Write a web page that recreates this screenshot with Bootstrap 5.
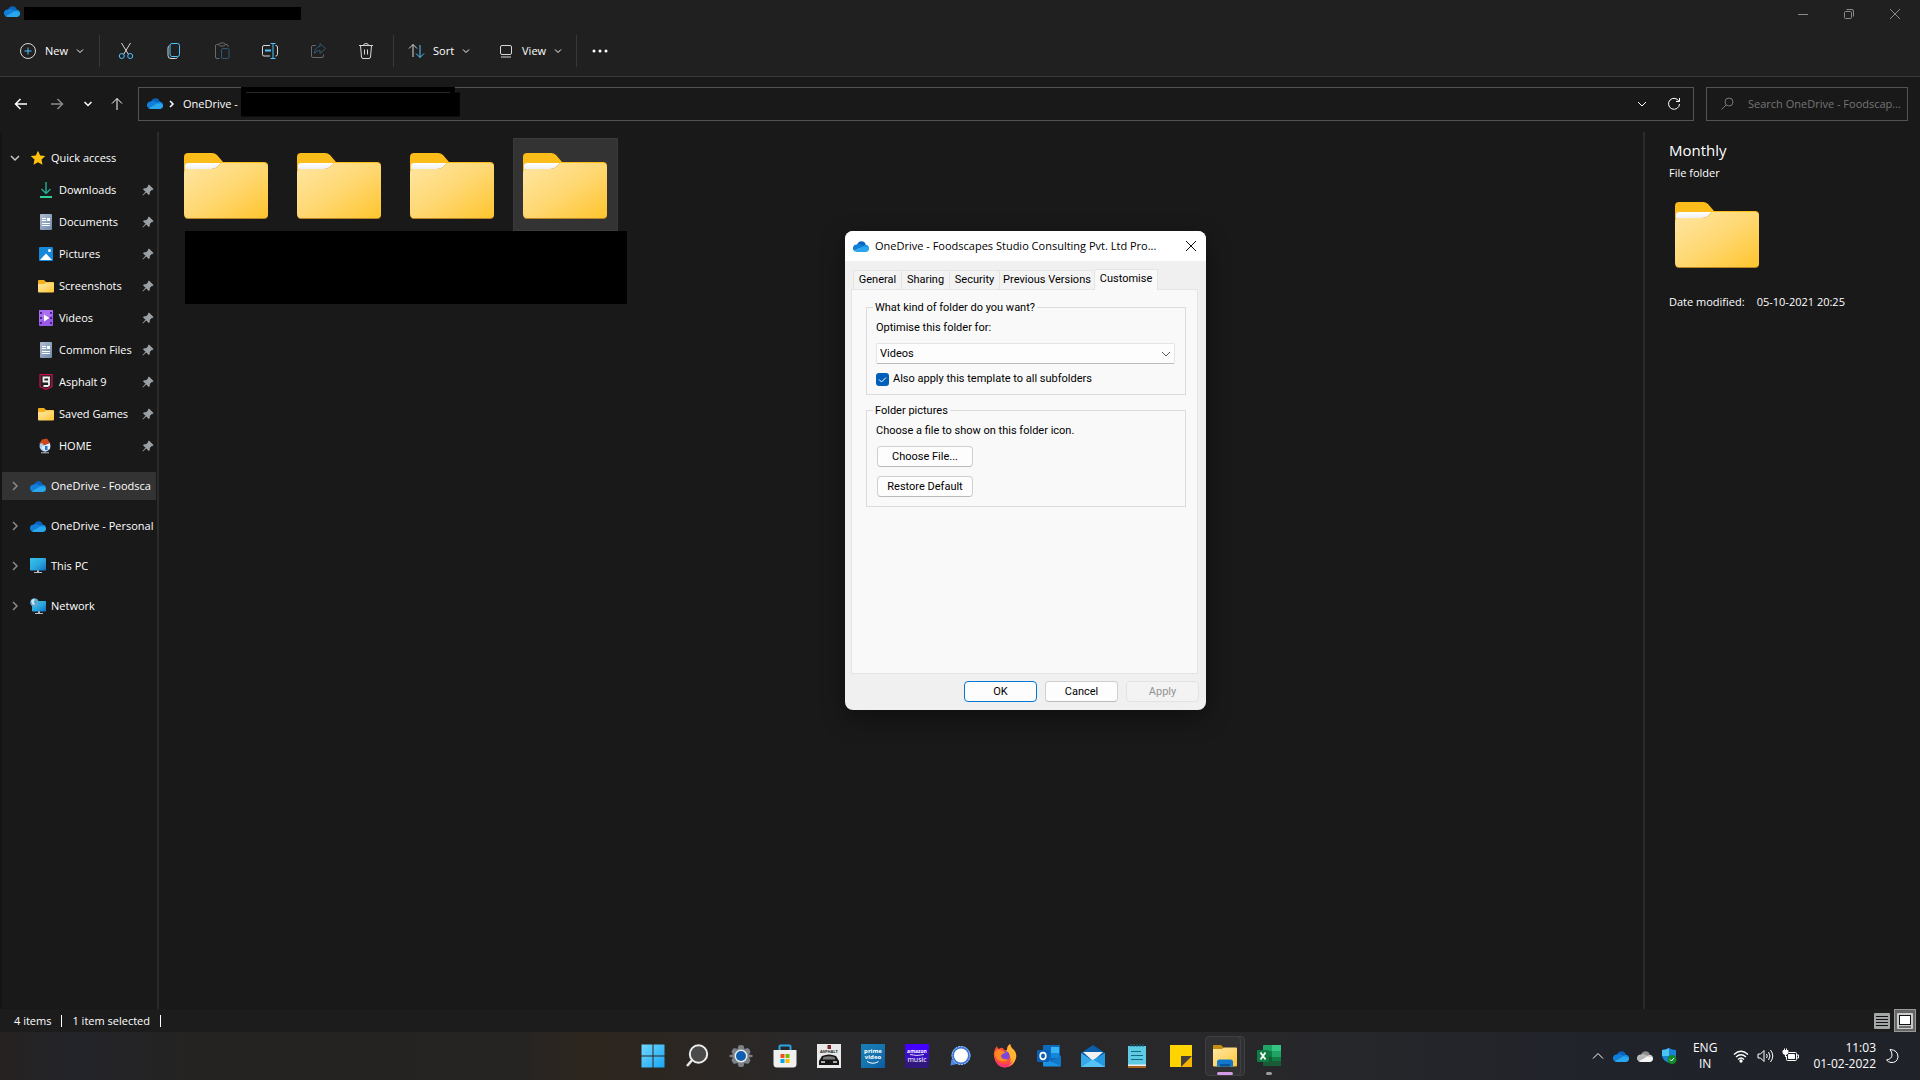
<!DOCTYPE html>
<html lang="en" data-bs-theme="dark">
<head>
<meta charset="utf-8">
<meta name="viewport" content="width=device-width, initial-scale=1">
<title>OneDrive - File Explorer</title>
<link href="https://cdn.jsdelivr.net/npm/bootstrap@5.3.0/dist/css/bootstrap.min.css" rel="stylesheet">
<style>
body{font-family:"Open Sans","Noto Sans",sans-serif;font-size:11px;line-height:16px;background:#191919;color:#fff}
svg{display:block;flex:none}
button{font:inherit}
a{color:inherit;text-decoration:none}
.plain{background:none;border:0;color:inherit;padding:0}
.window-top{background:#202020;border-bottom:1px solid #3b3b3b}
.title-row{height:25px;padding:0 2px 0 4px}
.title-row>svg{margin-top:6px}
.hidden-title{background:#000;width:277px;height:13px;margin:7px 0 0 4px}
.cap-btn{width:46px;height:28px;color:#8a8a8a;display:flex;align-items:center;justify-content:center}
.tool-row{height:51px;padding-left:11px}
.tool-btn{height:32px;display:flex;align-items:center;justify-content:center}
.tool-new{padding:0 15px 0 8px}
.tool-group{padding:0 3px 0 2px}
.tool-drop{padding:0 14px}
.tool-icon{width:48px}
.tool-sep{width:1px;height:32px;background:#383838}
.nav-row{height:55px;padding:10px 12px 12px 5px}
.nav-btn{width:32px;height:32px;display:flex;align-items:center;justify-content:center}
.nav-btn.slim{width:29px}
.addr{border:1px solid #535353;height:34px;padding:0 4px 0 8px;margin-left:7px}
.hidden-path{background:linear-gradient(#292929,#292929) 5px 5px/204px 1px no-repeat,#000;width:219px;height:30px;margin-left:3px;margin-top:-4px;clip-path:polygon(0 0,214px 0,214px 6px,100% 6px,100% 100%,0 100%)}
.find{border:1px solid #535353;width:202px;height:34px;margin-left:12px;padding-left:14px;gap:14px}
.find input{background:none;border:0;outline:0;color:#fff;width:100%;padding:0;text-overflow:ellipsis}
.find input::placeholder{color:#767676;opacity:1}
.side{width:159px;padding:12px 1px 0 0;border-left:2px solid #141414;border-right:2px solid #2b2b2b}
.side ul{margin:0;padding:0;list-style:none}
.side-link{height:28px;display:flex;align-items:center;overflow:hidden;white-space:nowrap;padding-left:8px}
.side-link.sub-link{padding:0 2px 0 36px;margin-top:4px}
.side-link .caret{width:10px;margin-right:10px}
.side-link .ico{width:16px;margin-right:5px}
.grp{margin-top:12px}
.side-link.on{background:#333}
.files{padding:6px 15px}
.tile{width:105px;height:93px;padding:15px 10px 0}
.tile.on{background:#333;box-shadow:inset 0 0 0 1px #3a3a3a}
.hidden-names{background:#000;width:442px;height:73px;margin-left:11px}
.detail{width:277px;border-left:2px solid #2b2b2b;padding:7px 24px}
.detail h1{font-size:15px;line-height:22px;margin:0}
.detail svg{margin:21px 0 26px 6px}
.status{height:23px;background:#1c1c1c;padding:0 4px 0 14px}
.bar-sep{width:1px;height:12px;background:#fff;margin:0 10px}
.view-on{width:22px;height:23px;background:#666;border:1px solid #999;display:flex;align-items:center;justify-content:center}
.task{height:48px;padding-right:20px;background:linear-gradient(90deg,#262221 0,#23242a 4%,#252322 10%,#252423 27%,#2d261f 30%,#2c2620 34%,#29282a 43%,#28282a 64%,#21232b 84%,#20222a 100%)}
.task-apps{padding-left:2px}
.task-btn{width:44px;height:48px;display:flex;align-items:center;justify-content:center;position:relative}
.task-btn.on::before,.task-btn.on::after{content:"";position:absolute;top:4px;height:40px;border-radius:4px;background:#313133;border:1px solid #404042}
.task-btn.on::before{left:6px;width:36px}
.task-btn.on::after{left:2px;width:36px}
.task-btn.on svg,.task-btn.on .run{z-index:1}
.task-btn.on svg{position:relative}
.run{position:absolute;bottom:5px;height:3px;border-radius:2px;width:16px;background:#d29be4}
.run.idle{width:6px;background:#9a9a9a}
.tray{font-size:12px}
.clock{margin-left:14px}
.props{position:absolute;left:845px;top:231px;width:361px;border-radius:8px;background:#f0f0f0;color:#000;font-family:Roboto,"Liberation Sans",sans-serif;overflow:hidden;box-shadow:0 8px 24px #0006;line-height:14px}
.props-head{height:30px;background:#fff;padding:0 6px 0 8px;gap:6px;font-family:"Open Sans","Noto Sans",sans-serif}
.props-tabs{margin:7px 8px 0;height:21px}
.ptab{height:19px;border:1px solid #e5e5e5;border-bottom:0;border-left-width:0;background:#f3f3f3;text-align:center;width:48px}
.ptab:first-child{border-left-width:1px;width:49px}
.ptab.mid-tab{width:50px}
.ptab.long-tab{width:95px}
.ptab.on{height:21px;background:#f9f9f9;width:63px;position:relative;margin-bottom:-1px;padding-bottom:2px}
.ppanel{margin:0 8px 0 6px;border:1px solid #e5e5e5;background:#f9f9f9;height:385px;padding:17px 11px 0 14px}
.pbox{border:1px solid #dcdcdc;padding:13px 10px 8px 9px;position:relative}
.pbox+.pbox{margin-top:15px;padding-bottom:9px}
.pbox legend{font-size:11px;line-height:14px;position:absolute;top:-7px;left:6px;width:auto;padding:0 2px;background:#f9f9f9;margin:0;float:none}
.pbox select{appearance:none;display:block;width:100%;height:21px;border:1px solid #e5e5e5;border-bottom-color:#bbb;background:#fdfdfd url("data:image/svg+xml,%3Csvg xmlns='http://www.w3.org/2000/svg' width='10' height='10' fill='none' stroke='%23555'%3E%3Cpath d='M1 3L5 7L9 3'/%3E%3C/svg%3E") right 3px center no-repeat;border-radius:2px;color:#000;font:inherit;padding:0 3px}
.pbtn{height:21px;border:1px solid #d0d0d0;border-bottom-color:#bababa;border-radius:4px;background:#fdfdfd;color:#000;padding:0;line-height:14px}
.pbtn.wide{width:96px;display:block;margin-left:1px}
.pbtn.wide+.pbtn.wide{margin-top:9px}
.pbtn.foot{width:73px}
.pbtn.main-btn{border-color:#0078d4}
.pbtn:disabled{background:#f3f3f3;border-color:#e2e2e2;color:#929292}
.tick{appearance:none;width:13px;height:13px;border-radius:3px;background:#005fb8 url("data:image/svg+xml,%3Csvg xmlns='http://www.w3.org/2000/svg' width='13' height='13' fill='none' stroke='white'%3E%3Cpath d='M3 6.500L5.500 9L10 4.500'/%3E%3C/svg%3E") center no-repeat;margin:0;display:block}
.props-foot{padding:7px 7px 8px}
</style>
<script src="https://cdn.jsdelivr.net/npm/bootstrap@5.3.0/dist/js/bootstrap.bundle.min.js"></script>
</head>
<body class="d-flex flex-column vh-100 overflow-hidden">
<svg width="0" height="0" class="position-absolute" aria-hidden="true">
<defs>
<linearGradient id="gf" x1="0" y1="0" x2="1" y2="1"><stop offset="0" stop-color="#ffe6a3"/><stop offset=".5" stop-color="#ffd873"/><stop offset="1" stop-color="#ffc52e"/></linearGradient>
<linearGradient id="gw" x1="0" y1="0" x2="0" y2="1"><stop offset="0" stop-color="#fff"/><stop offset="1" stop-color="#d9dde3"/></linearGradient>
<linearGradient id="gd" x1="0" y1="0" x2="1" y2="1"><stop offset="0" stop-color="#aebfd4"/><stop offset="1" stop-color="#7189aa"/></linearGradient>
<linearGradient id="gm" x1="0" y1="0" x2="1" y2="1"><stop offset="0" stop-color="#35c5ea"/><stop offset=".55" stop-color="#2aa5dc"/><stop offset="1" stop-color="#0f6cc4"/></linearGradient>
<linearGradient id="gb" x1="0" y1="0" x2="1" y2="1"><stop offset="0" stop-color="#6fd8ff"/><stop offset="1" stop-color="#1ba5f2"/></linearGradient>
</defs>
<symbol id="folder" viewBox="0 0 84 66"><path d="M0 4Q0 0 4 0H28Q31 0 33 2L39 9H80Q84 9 84 13V40H0Z" fill="#fcbc19"/><path d="M1 24V13Q1 10 4 10H37L33 14Q31 16 28 16H8Z" fill="url(#gw)"/><path d="M0 61V20Q0 16 4 16H27Q31 16 33 14L37 10H80Q84 10 84 14V62Q84 66 80 66H4Q0 66 0 61Z" fill="#b98423"/><path d="M0 60V20Q0 16 4 16H27Q31 16 33 14L37 10H80Q84 10 84 14V61Q84 65 80 65H4Q0 65 0 60Z" fill="url(#gf)"/></symbol>
<symbol id="fold-s" viewBox="0 0 16 14"><path d="M0 2Q0 1 1 1H6L8 3H15Q16 3 16 4V8H0Z" fill="#f3b01c"/><path d="M0 5H6L8 3.500H15Q16 3.500 16 4.500V12.500Q16 13.500 15 13.500H1Q0 13.500 0 12.500Z" fill="url(#gf)"/></symbol>
<symbol id="cloud" viewBox="0 0 16 11"><path d="M4 4Q5 .5 8.500 .3Q11.500 .2 12.800 3.500L9 7L3 6Z" fill="#0a64bd"/><path d="M4 3.500A3.700 3.700 0 0 0 1.200 10L11 5L8 3.600Q6 2.600 4 3.500Z" fill="#0f7fdc"/><path d="M11 4.500Q12.500 3.200 14.500 4.200Q16 5.200 16 7.500L15 9L9 6Z" fill="#1391e4"/><path d="M1.200 10Q2.300 10.900 4 10.900H12.800Q15.700 10.800 16 8Q16 6.800 15.200 6.300L10 5.500Z" fill="#2aa6ee"/></symbol>
<symbol id="cloud-w" viewBox="0 0 16 11"><path d="M4 4Q5 .5 8.500 .3Q11.500 .2 12.800 3.500L9 7L3 6Z" fill="#8d8d8d"/><path d="M4 3.500A3.700 3.700 0 0 0 1.200 10L11 5L8 3.600Q6 2.600 4 3.500Z" fill="#b9b9b9"/><path d="M11 4.500Q12.500 3.200 14.500 4.200Q16 5.200 16 7.500L15 9L9 6Z" fill="#d2d2d2"/><path d="M1.200 10Q2.300 10.900 4 10.900H12.800Q15.700 10.800 16 8Q16 6.800 15.200 6.300L10 5.500Z" fill="#f5f5f5"/></symbol>
<symbol id="down" viewBox="0 0 8 8"><path d="M1 2.500L4 5.500L7 2.500" fill="none" stroke="currentColor"/></symbol>
<symbol id="cr" viewBox="0 0 10 10"><path d="M3 1L7 5L3 9" fill="none" stroke="#8a8a8a" stroke-width="1.500"/></symbol>
<symbol id="pin" viewBox="0 0 12 12"><path d="M7 .5L11.500 5L10.300 6.200L9.700 6L7.800 8V10.200L6.800 11L4.300 8.500L1 11.500L.5 11L3.500 7.700L1 5.200L1.900 4.200H4.100L6 2.300L5.800 1.700Z" fill="#9aa1a6"/></symbol>
<symbol id="doc" viewBox="0 0 16 16"><rect x="2" width="12" height="16" rx="1" fill="url(#gd)"/><path d="M4 4.500H8M4 6.500H8M4 9.500H12M4 11.500H12" stroke="#fff"/><rect x="9" y="4" width="3" height="3" fill="#fff"/></symbol>
<symbol id="pc" viewBox="0 0 16 16"><path d="M7 12H9V14H12V15H4V14H7Z" fill="#b8bec4"/><rect y="0" width="16" height="12.500" rx=".7" fill="url(#gm)"/></symbol>
</svg>

<header class="window-top">
  <div class="title-row d-flex align-items-start">
    <svg width="16" height="11"><use href="#cloud"/></svg>
    <div class="hidden-title"></div>
    <div class="d-flex ms-auto">
      <button class="plain cap-btn" aria-label="Minimise"><svg width="10" height="10"><path d="M0 5.500H10" stroke="currentColor"/></svg></button>
      <button class="plain cap-btn" aria-label="Restore"><svg width="10" height="10" fill="none" stroke="currentColor"><rect x=".5" y="2.500" width="7" height="7" rx="1"/><path d="M2.500 .5H8Q9.500 .5 9.500 2V7.500"/></svg></button>
      <button class="plain cap-btn" aria-label="Close"><svg width="10" height="10"><path d="M0 0L10 10M10 0L0 10" stroke="currentColor"/></svg></button>
    </div>
  </div>
  <nav class="tool-row d-flex align-items-center">
    <button class="plain tool-btn tool-new gap-2"><svg width="18" height="18" fill="none"><circle cx="9" cy="9" r="7.500" stroke="#d8d8d8"/><path d="M5.500 9H12.500M9 5.500V12.500" stroke="#4cc2ff"/></svg><span>New</span><svg width="8" height="8"><use href="#down"/></svg></button>
    <div class="tool-sep"></div>
    <div class="d-flex tool-group">
    <button class="plain tool-btn tool-icon" aria-label="Cut"><svg width="18" height="18" fill="none"><path d="M4.500 1L11.500 12.500M13.500 1L6.500 12.500" stroke="#d8d8d8"/><circle cx="4.800" cy="14" r="2.500" stroke="#4cc2ff"/><circle cx="13.200" cy="14" r="2.500" stroke="#4cc2ff"/></svg></button>
    <button class="plain tool-btn tool-icon" aria-label="Copy"><svg width="18" height="18" fill="none"><path d="M4.500 3.500Q3 4 3 6V13.500Q3 16.500 6 16.500H10.500Q12 16.500 12.500 15.500" stroke="#d8d8d8"/><rect x="5" y="1.500" width="9.500" height="13" rx="2" stroke="#4cc2ff"/></svg></button>
    <button class="plain tool-btn tool-icon" aria-label="Paste" disabled><svg width="18" height="18" fill="none"><path d="M6 2.500H3.500Q2.500 2.500 2.500 4V15Q2.500 16.500 4 16.500H6.500M12 2.500H14Q15 2.500 15 4V5" stroke="#686868"/><rect x="6" y="1" width="6" height="3" rx="1.500" stroke="#686868"/><rect x="8.500" y="6.500" width="7.500" height="10" rx="1.500" stroke="#315a70"/></svg></button>
    <button class="plain tool-btn tool-icon" aria-label="Rename"><svg width="18" height="18" fill="none"><path d="M9 3.500H3Q1.500 3.500 1.500 5V12.500Q1.500 14 3 14H9M14.500 3.500Q16.500 3.500 16.500 5V12.500Q16.500 14 14.500 14" stroke="#d8d8d8"/><path d="M4 8.500H10" stroke="#4cc2ff" stroke-width="2"/><path d="M9.500 1.500H14.500M9.500 16.500H14.500M12 1.500V16.500" stroke="#4cc2ff"/></svg></button>
    <button class="plain tool-btn tool-icon" aria-label="Share" disabled><svg width="18" height="18" fill="none"><path d="M7 3.500H4Q2.500 3.500 2.500 5V14Q2.500 15.500 4 15.500H13Q14.500 15.500 14.500 14V12.500" stroke="#686868"/><path d="M11 1.500L16.500 6.500L11 11.500V8.500Q7.500 8 5.500 11.500Q6 5 11 4.500Z" stroke="#315a70"/></svg></button>
    <button class="plain tool-btn tool-icon" aria-label="Delete"><svg width="18" height="18" fill="none" stroke="#d8d8d8"><path d="M2 3.500H16M3.500 3.500L4.500 15Q4.700 16.500 6 16.500H12Q13.300 16.500 13.500 15L14.500 3.500M6.500 3.500Q6.500 1.500 9 1.500Q11.500 1.500 11.500 3.500M7.500 7.500V12.500M10.500 7.500V12.500"/></svg></button>
    </div>
    <div class="tool-sep"></div>
    <button class="plain tool-btn tool-drop gap-2"><svg width="17" height="16" fill="none"><path d="M5 14V1.500M1 5.500L5 1.500L9 5.500" stroke="#d8d8d8"/><path d="M12 2V14.500M8 10.500L12 14.500L16 10.500" stroke="#4cc2ff"/></svg><span>Sort</span><svg width="8" height="8"><use href="#down"/></svg></button>
    <button class="plain tool-btn tool-drop gap-2"><svg width="16" height="16" fill="none" stroke="#d8d8d8"><rect x="2.500" y="2.500" width="11" height="9" rx="1.500"/><path d="M3 14H13"/></svg><span>View</span><svg width="8" height="8"><use href="#down"/></svg></button>
    <div class="tool-sep"></div>
    <button class="plain tool-btn tool-drop" aria-label="See more"><svg width="18" height="4" fill="#fff"><circle cx="3" cy="2" r="1.500"/><circle cx="9" cy="2" r="1.500"/><circle cx="15" cy="2" r="1.500"/></svg></button>
  </nav>
</header>

<div class="nav-row d-flex align-items-center">
  <div class="d-flex">
    <button class="plain nav-btn" aria-label="Back"><svg width="14" height="14" fill="none" stroke="#fff" stroke-width="1.500"><path d="M13 7H1.500M6.500 2L1.500 7L6.500 12"/></svg></button>
    <button class="plain nav-btn ms-1" aria-label="Forward"><svg width="14" height="14" fill="none" stroke="#8a8a8a" stroke-width="1.500"><path d="M1 7H12.500M7.500 2L12.500 7L7.500 12"/></svg></button>
    <button class="plain nav-btn slim" aria-label="Recent locations"><svg width="10" height="10" fill="none" stroke="#fff" stroke-width="1.500"><path d="M1.500 3L5 6.500L8.500 3"/></svg></button>
    <button class="plain nav-btn slim" aria-label="Up"><svg width="14" height="14" fill="none" stroke="#fff"><path d="M7 13V1.500M2 6.500L7 1.500L12 6.500"/></svg></button>
  </div>
  <div class="addr d-flex align-items-center flex-grow-1">
    <svg width="16" height="11"><use href="#cloud"/></svg>
    <svg width="8" height="10" class="ms-1 me-2" fill="none" stroke="#fff" stroke-width="1.500"><path d="M3 2L6 5L3 8"/></svg>
    <a href="#">OneDrive -</a>
    <div class="hidden-path"></div>
    <button class="plain ms-auto me-2 px-2" aria-label="Previous locations"><svg width="10" height="10" fill="none" stroke="#fff"><path d="M1 3L5 7L9 3"/></svg></button>
    <button class="plain px-1 me-1" aria-label="Refresh"><svg width="14" height="14" fill="none" stroke="#fff"><path d="M12 4.500A5.500 5.500 0 1 0 12.500 7M12.500 1V4.500H9"/></svg></button>
  </div>
  <label class="find d-flex align-items-center">
    <svg width="13" height="13" fill="none" stroke="#767676"><circle cx="8" cy="5" r="4"/><path d="M5 8L.5 12.500"/></svg>
    <input type="text" placeholder="Search OneDrive - Foodscap..." aria-label="Search">
  </label>
</div>

<main class="d-flex flex-grow-1">
  <nav class="side flex-shrink-0">
    <ul>
      <li><a href="#" class="side-link"><svg width="10" height="10" class="caret" fill="none" stroke="#c8c8c8" stroke-width="1.500"><path d="M1 3L5 7L9 3"/></svg><svg width="16" height="16" class="ico"><path d="M8 .8L10.200 5.500L15.300 6.100L11.500 9.600L12.500 14.700L8 12.200L3.500 14.700L4.500 9.600L.7 6.100L5.800 5.500Z" fill="#ffc20e"/></svg>Quick access</a></li>
      <li><a href="#" class="side-link sub-link"><svg width="16" height="16" class="ico" fill="none"><path d="M8 0V11.500M3.500 7L8 11.500L12.500 7" stroke="#1fa98c" stroke-width="1.500"/><path d="M2 15H14" stroke="#2fcf9b" stroke-width="2"/></svg>Downloads<svg width="12" height="12" class="ms-auto"><use href="#pin"/></svg></a></li>
      <li><a href="#" class="side-link sub-link"><svg width="16" height="16" class="ico"><use href="#doc"/></svg>Documents<svg width="12" height="12" class="ms-auto"><use href="#pin"/></svg></a></li>
      <li><a href="#" class="side-link sub-link"><svg width="16" height="16" class="ico"><rect x="1" y="1" width="14" height="14" rx="1" fill="#1687d9"/><path d="M2 14L8 7.500L14 14Z" fill="#fff"/><circle cx="11.500" cy="4.500" r="1.500" fill="#fff"/></svg>Pictures<svg width="12" height="12" class="ms-auto"><use href="#pin"/></svg></a></li>
      <li><a href="#" class="side-link sub-link"><svg width="16" height="14" class="ico"><use href="#fold-s"/></svg>Screenshots<svg width="12" height="12" class="ms-auto"><use href="#pin"/></svg></a></li>
      <li><a href="#" class="side-link sub-link"><svg width="16" height="16" class="ico"><rect x="1" width="14" height="16" rx="1" fill="#9a5be8"/><path d="M1 0H15V5L1 12Z" fill="#b57cf5" opacity=".6"/><path d="M6 4.500L11.500 8L6 11.500Z" fill="#fff"/><path d="M3 2V14M13 2V14" stroke="#4c1f96" stroke-width="2" stroke-dasharray="2 3"/></svg>Videos<svg width="12" height="12" class="ms-auto"><use href="#pin"/></svg></a></li>
      <li><a href="#" class="side-link sub-link"><svg width="16" height="16" class="ico"><use href="#doc"/></svg>Common Files<svg width="12" height="12" class="ms-auto"><use href="#pin"/></svg></a></li>
      <li><a href="#" class="side-link sub-link"><svg width="16" height="16" class="ico"><path d="M2 .7H14V12.500L8 15.300L2 12.500Z" fill="#222" stroke="#c4104d" stroke-width="1.300"/><path d="M11 7.500H5.500V3.500H11V11L9.500 12H5.500" fill="none" stroke="#f2f2f2" stroke-width="1.800"/></svg>Asphalt 9<svg width="12" height="12" class="ms-auto"><use href="#pin"/></svg></a></li>
      <li><a href="#" class="side-link sub-link"><svg width="16" height="14" class="ico"><use href="#fold-s"/></svg>Saved Games<svg width="12" height="12" class="ms-auto"><use href="#pin"/></svg></a></li>
      <li><a href="#" class="side-link sub-link"><svg width="16" height="16" class="ico"><circle cx="7" cy="8" r="5.500" fill="#a9cdef"/><path d="M6 7L12 5V11L7 13L3 10Z" fill="#dfeefb"/><path d="M1 6L4 1.500L9 .5L12 5L6 7.500L4 5Z" fill="#c9481d"/><rect x="7" y="8" width="2.500" height="4" fill="#2a72c8"/><path d="M3 14.800H11M7 13V15" stroke="#b9bcc0"/></svg>HOME<svg width="12" height="12" class="ms-auto"><use href="#pin"/></svg></a></li>
      <li class="grp"><a href="#" class="side-link on"><svg width="10" height="10" class="caret"><use href="#cr"/></svg><svg width="16" height="11" class="ico"><use href="#cloud"/></svg>OneDrive - Foodsca</a></li>
      <li class="grp"><a href="#" class="side-link"><svg width="10" height="10" class="caret"><use href="#cr"/></svg><svg width="16" height="11" class="ico"><use href="#cloud"/></svg>OneDrive - Personal</a></li>
      <li class="grp"><a href="#" class="side-link"><svg width="10" height="10" class="caret"><use href="#cr"/></svg><svg width="16" height="16" class="ico"><use href="#pc"/></svg>This PC</a></li>
      <li class="grp"><a href="#" class="side-link"><svg width="10" height="10" class="caret"><use href="#cr"/></svg><svg width="16" height="16" class="ico"><path d="M8 13H10V15H13V16H5V15H8Z" fill="#b8bec4"/><rect x="2" y="3" width="14" height="10.500" rx=".7" fill="url(#gm)"/><circle cx="4.500" cy="4.500" r="4.300" fill="#5aa7cf"/><path d="M1 3Q3 0 5 1.500L3.500 4L5 6L3 7Z" fill="#cdeaf5"/></svg>Network</a></li>
    </ul>
  </nav>
  <section class="files flex-grow-1">
    <div class="d-flex gap-2">
      <div class="tile"><svg width="84" height="66"><use href="#folder"/></svg></div>
      <div class="tile"><svg width="84" height="66"><use href="#folder"/></svg></div>
      <div class="tile"><svg width="84" height="66"><use href="#folder"/></svg></div>
      <div class="tile on"><svg width="84" height="66"><use href="#folder"/></svg></div>
    </div>
    <div class="hidden-names"></div>
  </section>
  <aside class="detail">
    <h1 class="fw-normal">Monthly</h1>
    <div class="mt-1">File folder</div>
    <svg width="84" height="66"><use href="#folder"/></svg>
    <div class="d-flex"><span>Date modified:</span><span class="ms-2 ps-1">05-10-2021 20:25</span></div>
  </aside>
</main>

<footer class="status d-flex align-items-center">
  <span>4 items</span><span class="bar-sep"></span><span>1 item selected</span><span class="bar-sep"></span>
  <button class="plain ms-auto me-1" aria-label="Details view"><svg width="16" height="16"><rect width="16" height="16" rx="1" fill="#a3a6a6"/><path d="M2 3.500H14M2 6.500H14M2 9.500H14M2 12.500H14" stroke="#111"/></svg></button>
  <button class="plain view-on" aria-label="Large icons view"><svg width="16" height="16"><rect width="16" height="16" rx="1" fill="#c9cccc"/><rect x="2.500" y="2.500" width="11" height="9" fill="#fff" stroke="#111"/><path d="M2 14H14" stroke="#111"/></svg></button>
</footer>

<footer class="task position-relative d-flex align-items-center justify-content-end">
  <div class="task-apps position-absolute top-0 start-50 translate-middle-x d-flex">
    <button class="plain task-btn" aria-label="Start"><svg width="24" height="24" fill="url(#gb)"><path d="M.5 .5H11.500V11.500H.5ZM12.500 .5H23.500V11.500H12.500ZM.5 12.500H11.500V23.500H.5ZM12.500 12.500H23.500V23.500H12.500Z"/></svg></button>
    <button class="plain task-btn" aria-label="Search"><svg width="24" height="24"><path d="M8 15L2 22" stroke="#e8e8e8" stroke-width="2.500"/><circle cx="13.500" cy="10" r="8.700" fill="#4a4a4a" stroke="#ececec" stroke-width="2"/></svg></button>
    <button class="plain task-btn" aria-label="Settings"><svg width="24" height="24"><path d="M9.500 1.500Q12 .5 14.500 1.500L15.500 5L19 4Q21 5.500 21.500 8L20 10.500L23.500 11V13L20 13.500L21.500 16Q21 18.500 19 20L15.500 19L14.500 22.500Q12 23.500 9.500 22.500L8.500 19L5 20Q3 18.500 2.500 16L4 13.500L.5 13V11L4 10.500L2.500 8Q3 5.500 5 4L8.500 5Z" fill="#7b8187"/><circle cx="12" cy="12" r="6.500" fill="#e8ebee"/><circle cx="12" cy="12" r="5" fill="#0f5fae"/></svg></button>
    <button class="plain task-btn" aria-label="Microsoft Store"><svg width="24" height="24"><path d="M6.500 6V2.500Q6.500 1.500 7.500 1.500H16.500Q17.500 1.500 17.500 2.500V6" fill="none" stroke="#28a7e8" stroke-width="2"/><path d="M.5 6H23.500V20Q23.500 23.500 20 23.500H4Q.5 23.500 .5 20Z" fill="#f0f0f0"/><path d="M7.500 10H11.500V14H7.500Z" fill="#f25022"/><path d="M12.500 10H16.500V14H12.500Z" fill="#7fba00"/><path d="M7.500 15H11.500V19H7.500Z" fill="#00a4ef"/><path d="M12.500 15H16.500V19H12.500Z" fill="#ffb900"/></svg></button>
    <button class="plain task-btn" aria-label="Asphalt 8"><svg width="24" height="24"><rect width="24" height="24" fill="#e9e9e9"/><rect x="10.500" y="1" width="3.500" height="4" fill="#7d2a2e"/><text x="12" y="9" font-size="4" font-weight="700" text-anchor="middle" fill="#222">ASPHALT</text><path d="M2 17L5 12Q12 9 19 12L22 17V21H2Z" fill="#161616"/><path d="M6.500 13Q12 11.500 17.500 13L18.500 15.500H5.500Z" fill="#777"/><path d="M4 18H8M16 18H20" stroke="#ddd" stroke-width="1.500"/></svg></button>
    <button class="plain task-btn" aria-label="Prime Video"><svg width="24" height="24"><rect width="24" height="24" fill="url(#gm)"/><rect width="24" height="24" fill="#08508f" opacity=".6"/><text x="12" y="9" font-size="6" font-weight="700" text-anchor="middle" fill="#fff">prime</text><text x="12" y="15" font-size="6" font-weight="700" text-anchor="middle" fill="#fff">video</text><path d="M6 17.500Q12 21 17.500 17.500" fill="none" stroke="#fff"/></svg></button>
    <button class="plain task-btn" aria-label="Amazon Music"><svg width="24" height="24"><rect width="24" height="24" fill="#4400ff"/><rect y="13" width="24" height="11" fill="#30187e"/><rect y="8" width="24" height="8" fill="#3a0fc4"/><text x="12" y="9" font-size="5" font-weight="700" text-anchor="middle" fill="#fff">amazon</text><path d="M5 10.500Q12 12.500 19 10.500" fill="none" stroke="#fff" stroke-width=".8"/><text x="12" y="18" font-size="7" text-anchor="middle" fill="#fff">music</text></svg></button>
    <button class="plain task-btn" aria-label="Signal"><svg width="24" height="24"><circle cx="12" cy="11.500" r="9.500" fill="#3f78d8"/><path d="M2.500 15L1.500 21.500L8 20Z" fill="#4e88e6"/><circle cx="12" cy="11.500" r="9" fill="none" stroke="#a9c7f5" stroke-dasharray="2 1"/><circle cx="12" cy="11.500" r="7" fill="#fff"/></svg></button>
    <button class="plain task-btn" aria-label="Firefox"><svg width="24" height="24"><path d="M1 13Q0 7 4 2Q4 4 6 5Q8 3 10 4Q11 7 14 6Q14 2 17 0Q18 4 21 6Q24 10 23 14Q21 23 12 23.500Q3 23 1 13Z" fill="#ff4f3a"/><path d="M14 6Q14 2 17 0Q18 4 21 6Q24 10 23 14Q21 21 15 22Q19 17 17 12Q15 9 12 8Z" fill="#ffb52e"/><path d="M8 9Q12 5 16 9Q18 14 14 16Q9 17 7 13Z" fill="#7b46dc"/><path d="M1.500 9Q4 4 8 6L13 9Q9 9 8 12Q9 16 15 15Q12 19 7 17Q2 14 1.500 9Z" fill="#ff8a22"/><path d="M2 15Q5 20 12 20Q17 20 20 16Q18 23 12 23.500Q4 23 2 15Z" fill="#f5317f" opacity=".8"/></svg></button>
    <button class="plain task-btn" aria-label="Outlook"><svg width="24" height="24"><rect x="6" y="1" width="17" height="19" rx="1" fill="#0f6abd"/><path d="M14 3H22V9H14Z" fill="#35b5f3"/><path d="M14 9H22V14H14Z" fill="#1487d8"/><path d="M6 13L15 18L24 11.500V21.500Q24 22.500 23 22.500H7Q6 22.500 6 21.500Z" fill="#1b92e4"/><path d="M24 11.500V22L14 17.500Z" fill="#1277c8"/><rect y="6" width="12" height="12" rx="1" fill="#0b5fb5"/><ellipse cx="6" cy="12" rx="2.800" ry="3.300" fill="none" stroke="#fff" stroke-width="1.700"/></svg></button>
    <button class="plain task-btn" aria-label="Mail"><svg width="24" height="24"><path d="M0 9L12 1L24 9V16H0Z" fill="#0b5ea8"/><path d="M2 8H22L12 17Z" fill="#f2f2f2"/><path d="M0 9L12 17V23H0Z" fill="#35a9ea"/><path d="M24 9L0 23H24Z" fill="#2598e2"/><path d="M0 23L12 15.500L24 23Z" fill="#55c4f5"/></svg></button>
    <button class="plain task-btn" aria-label="Notepad"><svg width="24" height="24"><path d="M3 20H21V24H3Z" fill="#a7601f"/><path d="M3 2H21V21H3Z" fill="#5ecbe4"/><path d="M3 20.500H21V22H3Z" fill="#eee"/><path d="M6 0V3M9 0V3M12 0V3M15 0V3M18 0V3" stroke="#176a86"/><path d="M6 7.500H16M6 11.500H18M6 15.500H18" stroke="#176a86"/></svg></button>
    <button class="plain task-btn" aria-label="Sticky Notes"><svg width="24" height="24"><path d="M1 1H23V23H1Z" fill="#ffd400"/><path d="M12 23L23 12V23Z" fill="#f4b400"/><path d="M12 12H23L12 23Z" fill="#474038"/></svg></button>
    <button class="plain task-btn on" aria-label="File Explorer"><svg width="24" height="24"><path d="M0 2Q0 1 1 1H8L11 4V8H0Z" fill="#c78c12"/><path d="M0 5H9L11 3.500H23Q24 3.500 24 4.500V21.500Q24 22.500 23 22.500H1Q0 22.500 0 21.500Z" fill="url(#gf)"/><path d="M4 22.500V18Q4 15.500 6.500 15.500H17.500Q20 15.500 20 18V22.500Z" fill="#1377cc"/><path d="M7 22.500V20H17V22.500Z" fill="#0b549c"/></svg><span class="run"></span></button>
    <button class="plain task-btn" aria-label="Excel"><svg width="24" height="24"><rect x="6" y="1" width="18" height="21" rx="1" fill="#21a366"/><path d="M15 1H24V7H15Z" fill="#33c481"/><path d="M6 7H15V13H6Z" fill="#107c41"/><path d="M15 7H24V13H15Z" fill="#21a366"/><path d="M6 13H24V22H6Z" fill="#185c37"/><path d="M15 13H24V17H15Z" fill="#107c41"/><rect y="6" width="12" height="12" rx="1" fill="#107c41"/><path d="M3.500 8.500L8.500 15.500M8.500 8.500L3.500 15.500" stroke="#fff" stroke-width="1.800"/></svg><span class="run idle"></span></button>
  </div>
  <div class="tray d-flex align-items-center">
    <button class="plain" aria-label="Show hidden icons"><svg width="14" height="10" fill="none" stroke="#fff"><path d="M2 7.500L7 2.500L12 7.500"/></svg></button>
    <svg width="16" height="11" class="ms-2"><use href="#cloud"/></svg>
    <svg width="16" height="11" class="ms-2"><use href="#cloud-w"/></svg>
    <svg width="16" height="16" class="ms-2"><path d="M8 0Q11 2 15 2V8Q14 13 8 15Q2 13 1 8V2Q5 2 8 0Z" fill="#1b82d6"/><path d="M8 0Q5 2 1 2V8H8Z" fill="#4bc3f3"/><circle cx="11" cy="11.500" r="4.500" fill="#118a2a"/><path d="M9 11.500L10.500 13L13 10" fill="none" stroke="#fff"/></svg>
    <div class="text-center mx-3">ENG<br>IN</div>
    <svg width="16" height="16" fill="none" stroke="#fff" stroke-width="1.300"><path d="M1 6.500Q8 0 15 6.500M3 9Q8 4.500 13 9M5 11.500Q8 8.500 11 11.500"/><circle cx="8" cy="13" r="1" fill="#fff"/></svg>
    <svg width="17" height="16" fill="none" stroke="#fff" class="ms-2"><path d="M1 6H3.500L7 2.500V13.500L3.500 10H1ZM9.500 6Q11 8 9.500 10M11.500 4Q14.500 8 11.500 12M13.500 2Q18 8 13.500 14"/></svg>
    <svg width="17" height="16" class="ms-2" fill="none" stroke="#fff"><path d="M6.500 4.500H13.500Q14.500 4.500 14.500 5.500V11.500Q14.500 12.500 13.500 12.500H5.500Q4.500 12.500 4.500 11.500V8M15 7H16.500V10H15"/><path d="M6.500 6.500H12.500V10.500H6.500Z" fill="#fff"/><path d="M1 2.500H6V4.500Q6 6.500 3.500 6.500Q1 6.500 1 4.500ZM2.500 2.500V.5M4.500 2.500V.5M3.500 6.500V9" fill="#fff"/></svg>
    <div class="clock text-end">11:03<br>01-02-2022</div>
    <svg width="16" height="16" class="ms-2" fill="none" stroke="#fff"><path d="M6 1.500Q14 2 14 9Q13 15 7 14.500Q4 14 2.500 12Q8 11 8 7Q8 4 6 1.500Z"/></svg>
  </div>
</footer>

<div class="props" role="dialog" aria-labelledby="ptitle">
  <div class="props-head d-flex align-items-center">
    <svg width="16" height="11"><use href="#cloud"/></svg>
    <span id="ptitle" class="text-nowrap">OneDrive - Foodscapes Studio Consulting Pvt. Ltd Pro...</span>
    <button class="plain ms-auto px-1" aria-label="Close"><svg width="10" height="10"><path d="M0 0L10 10M10 0L0 10" stroke="#111"/></svg></button>
  </div>
  <div class="props-tabs d-flex align-items-end" role="tablist">
    <button class="plain ptab" role="tab">General</button>
    <button class="plain ptab" role="tab">Sharing</button>
    <button class="plain ptab mid-tab" role="tab">Security</button>
    <button class="plain ptab long-tab" role="tab">Previous Versions</button>
    <button class="plain ptab on" role="tab" aria-selected="true">Customise</button>
  </div>
  <div class="ppanel">
    <fieldset class="pbox">
      <legend>What kind of folder do you want?</legend>
      <label for="kind" class="d-block pb-2">Optimise this folder for:</label>
      <select id="kind"><option>Videos</option></select>
      <div class="d-flex align-items-center gap-1 mt-2">
        <input class="tick" type="checkbox" id="sub" checked><label for="sub">Also apply this template to all subfolders</label>
      </div>
    </fieldset>
    <fieldset class="pbox">
      <legend>Folder pictures</legend>
      <p class="mb-2">Choose a file to show on this folder icon.</p>
      <button class="pbtn wide">Choose File...</button>
      <button class="pbtn wide">Restore Default</button>
    </fieldset>
  </div>
  <div class="props-foot d-flex justify-content-end gap-2">
    <button class="pbtn foot main-btn">OK</button>
    <button class="pbtn foot">Cancel</button>
    <button class="pbtn foot" disabled>Apply</button>
  </div>
</div>
</body>
</html>
